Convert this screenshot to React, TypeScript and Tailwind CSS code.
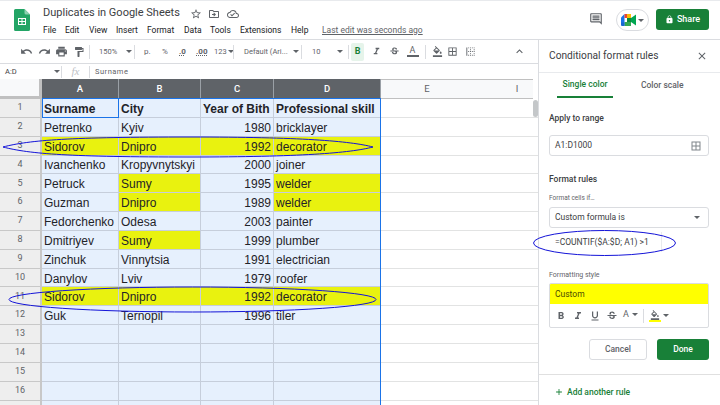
import { MdUndo, MdRedo, MdPrint, MdFormatPaint, MdExpandLess, MdClose, MdStarBorder, MdOutlineDriveFileMove, MdOutlineCloudDone, MdOutlineComment, MdLock, MdAdd, MdFormatItalic, MdStrikethroughS, MdFormatUnderlined, MdFormatBold, MdFormatColorFill, MdBorderAll, MdBorderLeft } from "react-icons/md";

const Caret = ({ c = "" }: { c?: string }) => (
  <span className={"inline-block w-0 h-0 border-l-[3px] border-r-[3px] border-t-[3px] border-l-transparent border-r-transparent border-t-[#5f6368] " + c} />
);
const Sep = () => <div className="w-px h-[14px] bg-[#dadce0] shrink-0" />;

const rows: [string, string, string, string, number][] = [
  ["Surname", "City", "Year of Bith", "Professional skill", 0],
  ["Petrenko", "Kyiv", "1980", "bricklayer", 0],
  ["Sidorov", "Dnipro", "1992", "decorator", 15],
  ["Ivanchenko", "Kropyvnytskyi", "2000", "joiner", 0],
  ["Petruck", "Sumy", "1995", "welder", 10],
  ["Guzman", "Dnipro", "1989", "welder", 10],
  ["Fedorchenko", "Odesa", "2003", "painter", 0],
  ["Dmitriyev", "Sumy", "1999", "plumber", 2],
  ["Zinchuk", "Vinnytsia", "1991", "electrician", 0],
  ["Danylov", "Lviv", "1979", "roofer", 0],
  ["Sidorov", "Dnipro", "1992", "decorator", 15],
  ["Guk", "Ternopil", "1996", "tiler", 0],
  ["", "", "", "", 0],
  ["", "", "", "", 0],
  ["", "", "", "", 0],
  ["", "", "", "", 0],
  ["", "", "", "", 0],
];

const Cell = ({ w, v, y, right, bold }: { w: string; v: string; y: boolean; right?: boolean; bold?: boolean }) => (
  <div className={`${w} shrink-0 h-full border-r border-b border-r-[#c6cedb] border-b-[#c6cedb] flex items-center pl-[2px] pr-[2px] pt-[2px] font-['Liberation_Sans',sans-serif] text-[12px] text-[#1f2329] overflow-hidden whitespace-nowrap ${y ? "bg-[#e9f20f]" : "bg-[#e6f0fd]"} ${right ? "justify-end" : ""} ${bold ? "font-bold" : ""}`}>
    {v}
  </div>
);

export default function App() {
  return (
    <div className="relative w-[720px] h-[405px] overflow-hidden bg-white text-[#3c4043] font-['Roboto','Liberation_Sans',sans-serif]">
      {/* title bar */}
      <div className="h-[39px] flex border-t border-[#e8eaed]">
        <div className="w-[43px] shrink-0 flex items-start justify-center pl-[1px] pt-[8px]">
          <svg width="16" height="22" viewBox="0 0 16 22">
            <path d="M1.5 0H10.5L16 5.5V20.5A1.5 1.5 0 0 1 14.5 22H1.5A1.5 1.5 0 0 1 0 20.5V1.5A1.5 1.5 0 0 1 1.5 0Z" fill="#23a566" />
            <path d="M10.5 0L16 5.5H12A1.5 1.5 0 0 1 10.5 4Z" fill="#8ed1b1" />
            <path d="M4 9H12V16H4ZM5 10V12H7.5V10ZM8.5 10V12H11V10ZM5 13V15H7.5V13ZM8.5 13V15H11V13Z" fill="#fff" fillRule="evenodd" />
          </svg>
        </div>
        <div className="flex-1 flex flex-col">
          <div className="h-[19px] mt-[3px] flex items-center">
            <span className="text-[11px] text-[#3c4043] w-[147px] whitespace-nowrap">Duplicates in Google Sheets</span>
            <MdStarBorder size={12} className="text-[#5f6368]" />
            <MdOutlineDriveFileMove size={12} className="ml-[6px] text-[#5f6368]" />
            <MdOutlineCloudDone size={12} className="ml-[7px] text-[#5f6368]" />
          </div>
          <div className="h-[14px] flex items-center text-[8.5px] text-[#202124] whitespace-nowrap">
            <span className="w-[22px]">File</span>
            <span className="w-[24px]">Edit</span>
            <span className="w-[27px]">View</span>
            <span className="w-[31px]">Insert</span>
            <span className="w-[37px]">Format</span>
            <span className="w-[26px]">Data</span>
            <span className="w-[30px]">Tools</span>
            <span className="w-[51px]">Extensions</span>
            <span className="w-[31px]">Help</span>
            <span className="underline text-[#5f6368]">Last edit was seconds ago</span>
          </div>
        </div>
        <div className="flex items-start pt-[8px] pr-[11px]">
          <MdOutlineComment size={14} className="text-[#5f6368] mt-[3px] mr-[13px]" />
          <div className="w-[33px] h-[22px] rounded-full border border-[#dadce0] flex items-center justify-center gap-[2px] mr-[7px]">
            <svg width="15" height="12" viewBox="0 0 15 12">
              <path d="M0 3.5L3.5 0V12L0 8.5Z" fill="#1a73e8" />
              <path d="M3.5 0H10V4H3.5Z" fill="#ea4335" />
              <path d="M3.5 8H10V12H3.5Z" fill="#34a853" />
              <path d="M0 8.5H3.5V12H1A1 1 0 0 1 0 11Z" fill="#1967d2" />
              <path d="M6 0H10V4L6 4Z" fill="#fbbc04" />
              <path d="M10 4V8L15 11.5V.5Z" fill="#00a651" />
              <path d="M6 4H10V8H6Z" fill="#0c8a3e" />
            </svg>
            <Caret c="border-t-[#1a73e8]" />
          </div>
          <div className="w-[53px] h-[21px] rounded-[3px] bg-[#188038] flex items-center justify-center gap-[3px] text-white text-[9px] font-medium">
            <MdLock size={9} />
            Share
          </div>
        </div>
      </div>

      <div className="flex h-[366px]">
        {/* left */}
        <div className="w-[538px] shrink-0 flex flex-col border-t border-[#dadce0]">
          {/* toolbar */}
          <div className="h-[24px] flex items-center border-b border-[#dadce0] text-[#5f6368] shrink-0 pl-[20px]">
            <div className="w-[18px]"><MdUndo size={13} /></div>
            <div className="w-[17px]"><MdRedo size={13} /></div>
            <div className="w-[18px]"><MdPrint size={13} /></div>
            <div className="w-[16px]"><MdFormatPaint size={12} /></div>
            <Sep />
            <div className="w-[44px] flex items-center pl-[9px] text-[7.5px]"><span className="w-[27px]">150%</span><Caret /></div>
            <Sep />
            <div className="w-[19px] text-[8px] pl-[9px]">p.</div>
            <div className="w-[16px] text-[8px] pl-[8px]">%</div>
            <div className="w-[18px] text-[8px] font-bold pl-[9px] underline decoration-dotted">.0</div>
            <div className="w-[17px] text-[8px] font-bold pl-[8px] underline decoration-dotted">.00</div>
            <div className="w-[28px] flex items-center gap-[1px] pl-[9px] text-[7.5px]">123<Caret /></div>
            <Sep />
            <div className="w-[67px] flex items-center pl-[10px] text-[7.5px] whitespace-nowrap"><span className="w-[49px]">Default (Ari...</span><Caret /></div>
            <Sep />
            <div className="w-[46px] flex items-center pl-[10px] text-[7.5px]"><span className="w-[25px]">10</span><Caret /></div>
            <Sep />
            <div className="ml-[2px] w-[13px] h-[18px] rounded-[2px] bg-[#e6f4ea] flex items-center justify-center text-[9px] font-bold text-[#188038]">B</div>
            <div className="w-[22px] pl-[7px]"><MdFormatItalic size={11} /></div>
            <div className="w-[18px] pl-[3px]"><MdStrikethroughS size={11} /></div>
            <div className="w-[17px] flex flex-col items-center text-[9px] leading-[9px]"><span>A</span><span className="w-[12px] h-[2px] bg-[#5f6368]" /></div>
            <div className="ml-[4px]"><Sep /></div>
            <div className="w-[17px] pl-[6px]"><MdFormatColorFill size={11} /></div>
            <div className="w-[18px] pl-[4px]"><MdBorderAll size={11} /></div>
            <div className="w-[22px] pl-[4px]"><MdBorderLeft size={11} /></div>
            <div className="ml-[30px]"><MdExpandLess size={13} /></div>
          </div>
          {/* formula bar */}
          <div className="h-[15px] flex items-center shrink-0 text-[7.5px] text-[#3c4043]">
            <div className="w-[61px] flex items-center pl-[5px]"><span className="w-[49px]">A:D</span><Caret /></div>
            <div className="w-px h-[12px] bg-[#dadce0]" />
            <span className="w-[27px] text-center font-['Liberation_Serif',serif] italic text-[11px] text-[#bdc1c6]">fx</span>
            <div className="w-px h-[12px] bg-[#dadce0]" />
            <span className="pl-[5px] tracking-[0.5px] text-[#5f6368]">Surname</span>
          </div>
          {/* column headers */}
          <div className="h-[20px] flex shrink-0 text-[9.5px] font-medium">
            <div className="w-[42px] h-full bg-[#f8f9fa] border-r-[3px] border-b-[3px] border-[#c0c0c0]" />
            {([["A", "w-[77px]"], ["B", "w-[82px]"], ["C", "w-[73px]"], ["D", "w-[107px]"]] as const).map(([l, w]) => (
              <div key={l} className={`${w} shrink-0 h-full bg-[#5f6368] text-white border-r border-[#9aa0a6] flex items-center justify-center`}>{l}</div>
            ))}
            <div className="flex-1 flex bg-[#f8f9fa] border-t border-b border-[#c0c0c0] text-[#5f6368] font-normal mr-[5px]">
              <div className="w-[92px] flex items-center justify-center">E</div>
              <div className="flex-1 flex items-center justify-center pl-[28px]">I</div>
            </div>
          </div>
          {/* grid */}
          <div className="flex flex-col">
            {rows.map((r, i) => (
              <div key={i} className="h-[18.85px] flex shrink-0">
                <div className="w-[42px] shrink-0 h-full bg-[#eeeeee] border-r-[2px] border-r-[#c8c8c8] border-b border-b-[#c8c8c8] flex items-center justify-center text-[9px] text-[#5f6368]">{i < 16 ? i + 1 : ""}</div>
                <Cell w="w-[77px]" v={r[0]} y={(r[4] & 1) > 0} bold={i === 0} />
                <Cell w="w-[82px]" v={r[1]} y={(r[4] & 2) > 0} bold={i === 0} />
                <Cell w="w-[73px]" v={r[2]} y={(r[4] & 4) > 0} right={i > 0} bold={i === 0} />
                <Cell w="w-[107px]" v={r[3]} y={(r[4] & 8) > 0} bold={i === 0} />
                <div className="flex-1 h-full border-b border-b-[#e2e3e3] bg-white" />
              </div>
            ))}
          </div>
        </div>

        {/* side panel */}
        <div className="flex-1 border-l border-t border-[#dadce0] flex flex-col text-[#3c4043]">
          <div className="h-[33px] shrink-0 flex items-center justify-between pl-[10px] pr-[12px] border-b border-[#e8eaed]">
            <span className="text-[10.2px] whitespace-nowrap">Conditional format rules</span>
            <MdClose size={12} className="text-[#5f6368]" />
          </div>
          <div className="h-[25px] shrink-0 flex text-[8.5px] font-medium">
            <div className="ml-[18px] w-[56px] flex items-center justify-center border-b-[2px] border-[#188038] text-[#188038]">Single color</div>
            <div className="ml-[28px] text-[#5f6368] flex items-center">Color scale</div>
          </div>
          <div className="flex flex-col px-[10px] pr-[11px]">
            <div className="mt-[14px] h-[12px] flex items-center text-[8.5px] font-medium">Apply to range</div>
            <div className="mt-[11px] h-[21px] border border-[#dadce0] rounded-[3px] flex items-center justify-between pl-[5px] pr-[6px] text-[8.5px]">
              A1:D1000
              <MdBorderAll size={12} className="text-[#80868b]" />
            </div>
            <div className="mt-[17px] h-[12px] flex items-center text-[8.5px] font-medium">Format rules</div>
            <div className="mt-[9px] h-[10px] flex items-center text-[6.5px] text-[#5f6368]">Format cells if…</div>
            <div className="mt-[3px] h-[21px] border border-[#dadce0] rounded-[3px] flex items-center justify-between pl-[5px] pr-[8px] text-[8.5px]">
              Custom formula is
              <Caret />
            </div>
            <div className="mt-[4px] h-[20px] w-[113px] border-r border-[#e8eaed] flex items-center pl-[6px] text-[8.5px]">=COUNTIF($A:$D; A1) &gt;1</div>
            <div className="mt-[18px] h-[10px] flex items-center text-[7px] text-[#5f6368]">Formatting style</div>
            <div className="mt-[3px] border border-[#dadce0] rounded-[2px] overflow-hidden h-[45px] flex flex-col">
              <div className="h-[20px] bg-[#ffff00] flex items-center pl-[5px] text-[8.5px] text-[#4a4a00]">Custom</div>
              <div className="flex-1 flex items-center pl-[5px] text-[#5f6368]">
                <div className="w-[17px]"><MdFormatBold size={12} /></div>
                <div className="w-[17px]"><MdFormatItalic size={12} /></div>
                <div className="w-[17px]"><MdFormatUnderlined size={12} /></div>
                <div className="w-[17px]"><MdStrikethroughS size={12} /></div>
                <div className="w-[20px] flex items-center gap-[3px] text-[9px] pb-[2px]">A<Caret /></div>
                <Sep />
                <div className="ml-[5px] flex items-center gap-[2px]">
                  <div className="flex flex-col items-center"><MdFormatColorFill size={10} /><span className="w-[12px] h-[2px] bg-[#ffff00]" /></div>
                  <Caret />
                </div>
              </div>
            </div>
            <div className="mt-[11px] flex justify-end gap-[10px]">
              <div className="w-[58px] h-[21px] border border-[#dadce0] rounded-[3px] flex items-center justify-center text-[8.5px] font-medium text-[#5f6368]">Cancel</div>
              <div className="w-[52px] h-[21px] bg-[#188038] rounded-[3px] flex items-center justify-center text-[8.5px] font-medium text-white">Done</div>
            </div>
          </div>
          <div className="mt-[14px] border-t border-[#e0e0e0]" />
          <div className="mt-[11px] ml-[15px] flex items-center gap-[3px] text-[8.5px] font-medium text-[#188038]">
            <MdAdd size={10} />
            Add another rule
          </div>
        </div>
      </div>

      {/* scrollbar thumb */}
      <div className="absolute left-[533px] top-[100px] w-[5px] h-[17px] rounded-[3px] bg-[#c4c7c9]" />
      {/* selection outlines */}
      <div className="absolute left-[42px] top-[98px] w-[339px] h-[307px] border-t border-r border-[#1a73e8]" />
      <div className="absolute left-[42px] top-[98px] w-[77px] h-[20px] border border-[#1a73e8]" />
      {/* hand-drawn ellipses */}
      <svg className="absolute left-0 top-0 pointer-events-none" width="720" height="405" viewBox="0 0 720 405" fill="none">
        <path d="M3 147C30 140 70 137 190 137C300 137 350 141 373 147C350 153 300 157 190 157C70 157 30 154 3 147Z" stroke="#1414d8" strokeWidth="1" />
        <ellipse cx="192.5" cy="299.5" rx="183.5" ry="12.5" stroke="#1414d8" strokeWidth="1" />
        <ellipse cx="604.5" cy="243" rx="71" ry="12.5" stroke="#1414d8" strokeWidth="1" />
      </svg>
    </div>
  );
}
